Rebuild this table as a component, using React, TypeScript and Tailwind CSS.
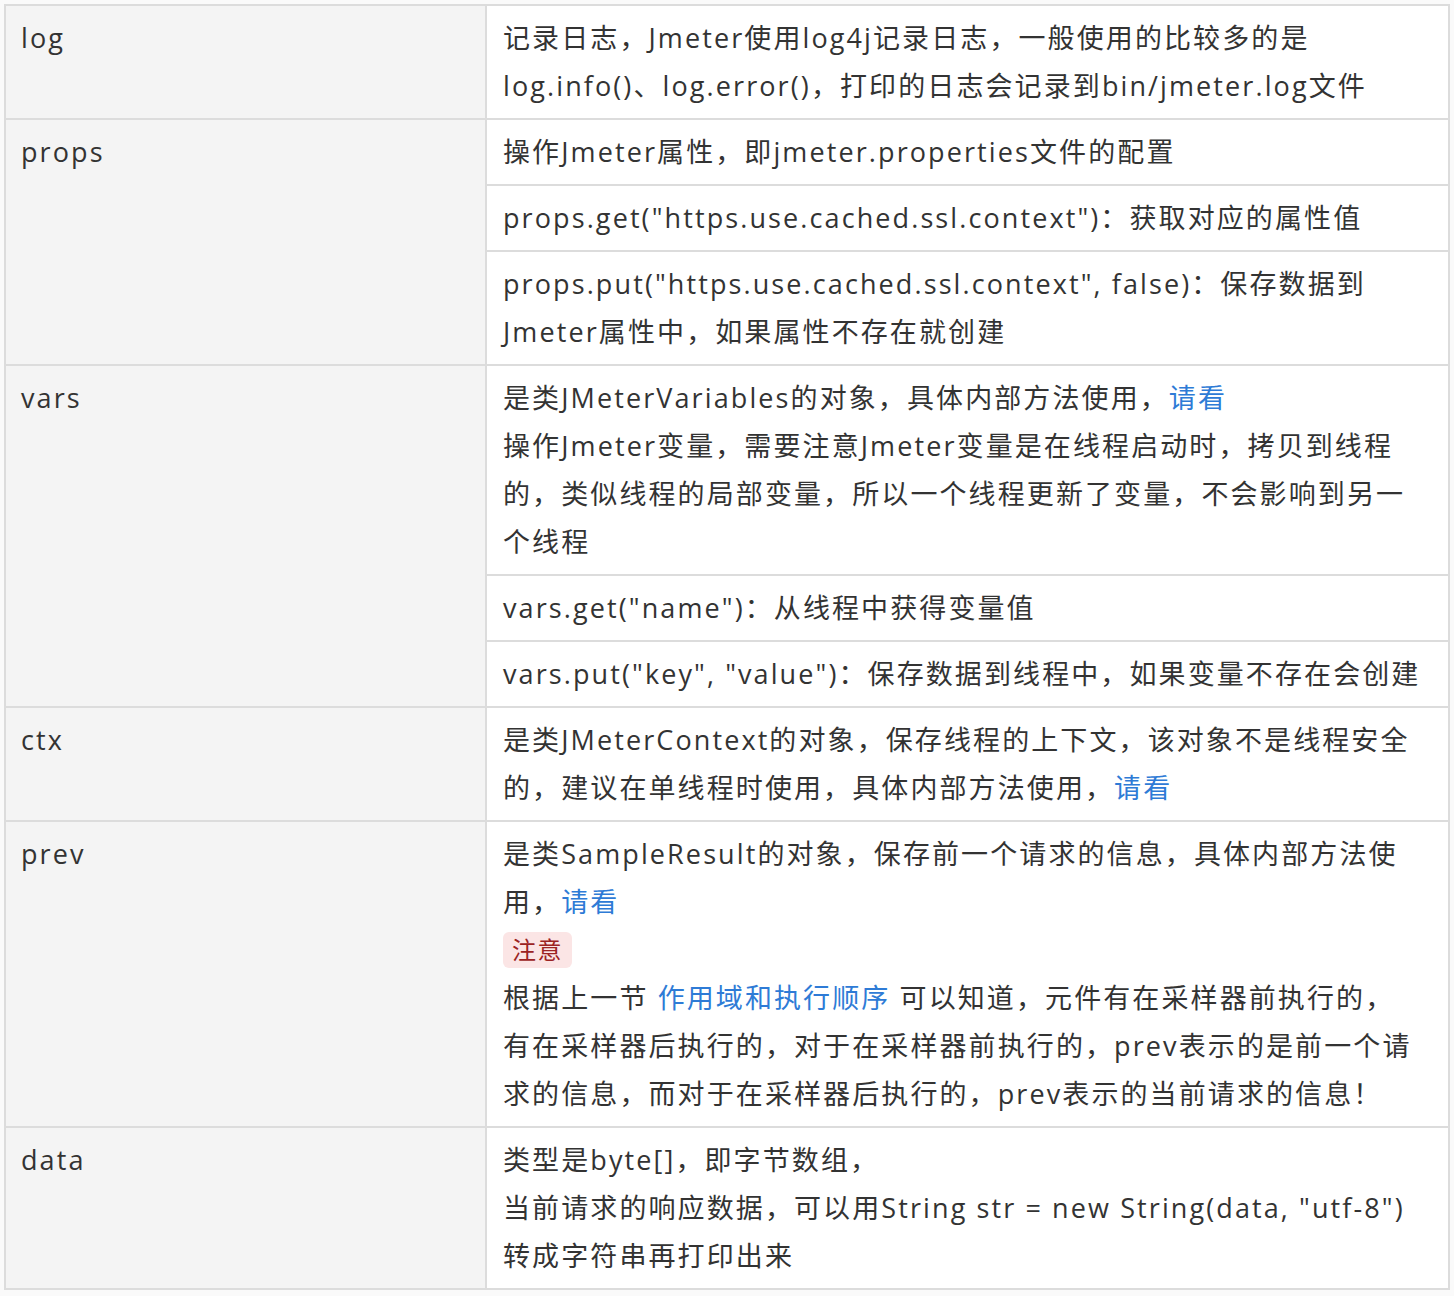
import React from "react";

const A = ({ children }: { children: React.ReactNode }) => (
  <span className="text-[#2e7bd6]">{children}</span>
);

const L = "border-2 border-[#dcdcdc] bg-[#f4f4f4] px-[15px] py-2 align-top";
const R = "border-2 border-[#dcdcdc] bg-white px-4 py-2 align-top whitespace-nowrap";

export default function App() {
  return (
    <div
      className="min-h-[1296px] bg-[#fafafa] pl-1 pt-1 text-[27px] leading-[48px] tracking-[2.1px] text-[#333]"
      style={{ fontFamily: '"Open Sans", "Noto Sans CJK SC", sans-serif' }}
    >
      <table className="w-[1446px] table-fixed border-collapse">
        <colgroup>
          <col className="w-[481px]" />
          <col />
        </colgroup>
        <tbody>
          <tr>
            <td className={L}>log</td>
            <td className={R}>
              记录日志，Jmeter使用log4j记录日志，一般使用的比较多的是
              <br />
              log.info()、log.error()，打印的日志会记录到bin/jmeter.log文件
            </td>
          </tr>
          <tr>
            <td className={L} rowSpan={3}>props</td>
            <td className={R}>操作Jmeter属性，即jmeter.properties文件的配置</td>
          </tr>
          <tr>
            <td className={R}>props.get("https.use.cached.ssl.context")：获取对应的属性值</td>
          </tr>
          <tr>
            <td className={R}>
              props.put("https.use.cached.ssl.context", false)：保存数据到
              <br />
              Jmeter属性中，如果属性不存在就创建
            </td>
          </tr>
          <tr>
            <td className={L} rowSpan={3}>vars</td>
            <td className={R}>
              是类JMeterVariables的对象，具体内部方法使用，<A>请看</A>
              <br />
              操作Jmeter变量，需要注意Jmeter变量是在线程启动时，拷贝到线程
              <br />
              的，类似线程的局部变量，所以一个线程更新了变量，不会影响到另一
              <br />
              个线程
            </td>
          </tr>
          <tr>
            <td className={R}>vars.get("name")：从线程中获得变量值</td>
          </tr>
          <tr>
            <td className={R}>vars.put("key", "value")：保存数据到线程中，如果变量不存在会创建</td>
          </tr>
          <tr>
            <td className={L}>ctx</td>
            <td className={R}>
              是类JMeterContext的对象，保存线程的上下文，该对象不是线程安全
              <br />
              的，建议在单线程时使用，具体内部方法使用，<A>请看</A>
            </td>
          </tr>
          <tr>
            <td className={L}>prev</td>
            <td className={R}>
              是类SampleResult的对象，保存前一个请求的信息，具体内部方法使
              <br />
              用，<A>请看</A>
              <div className="flex h-[48px] items-center">
                <span className="inline-block h-[36px] rounded-[6px] bg-[#fbe5e5] px-[9px] text-[24px] leading-[36px] tracking-[1.5px] text-[#9b2323]">
                  注意
                </span>
              </div>
              根据上一节 <A>作用域和执行顺序</A> 可以知道，元件有在采样器前执行的，
              <br />
              有在采样器后执行的，对于在采样器前执行的，prev表示的是前一个请
              <br />
              求的信息，而对于在采样器后执行的，prev表示的当前请求的信息！
            </td>
          </tr>
          <tr>
            <td className={L}>data</td>
            <td className={R}>
              类型是byte[]，即字节数组，
              <br />
              当前请求的响应数据，可以用String str = new String(data, "utf-8")
              <br />
              转成字符串再打印出来
            </td>
          </tr>
        </tbody>
      </table>
    </div>
  );
}
